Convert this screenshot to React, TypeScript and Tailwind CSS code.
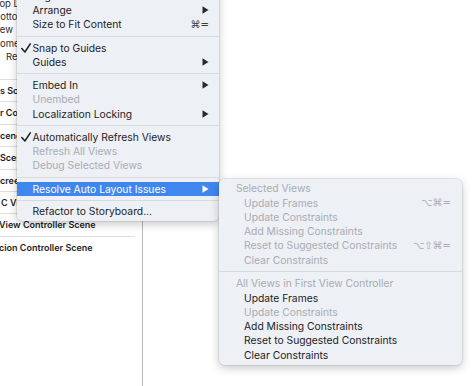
import React from "react";

type ItemProps = {
  label: string;
  disabled?: boolean;
  check?: boolean;
  arrow?: boolean;
  shortcut?: string;
  highlighted?: boolean;
  lead: string;
  pr: string;
};

const Check = () => (
  <svg width="10" height="10" viewBox="0 0 10 10" className="block">
    <path d="M0.8 5.6 L3.9 9 L9.3 0.8" fill="none" stroke="#1e1e1e" strokeWidth="1.5" strokeLinecap="round" strokeLinejoin="round" />
  </svg>
);

const Arrow = ({ white }: { white?: boolean }) => (
  <svg width="7" height="8" viewBox="0 0 7 8" className="block shrink-0">
    <path d="M0.5 0.3 L6.5 4 L0.5 7.7 Z" fill={white ? "#ffffff" : "#2a2a2a"} />
  </svg>
);

function Item({ label, disabled, check, arrow, shortcut, highlighted, lead, pr }: ItemProps) {
  const color = highlighted ? "text-white bg-[#3f87ef]" : disabled ? "text-[#a9acb2]" : "text-[#1d1d1f]";
  return (
    <div className={`h-[14.25px] flex items-center ${pr} ${color}`}>
      <div className={`${lead} shrink-0 flex items-center pl-[4px]`}>{check && <Check />}</div>
      <span className="flex-1 whitespace-nowrap leading-none">{label}</span>
      {arrow && <Arrow white={highlighted} />}
      {shortcut && (
        <span className={`font-['DejaVu_Sans',sans-serif] text-[10px] leading-none whitespace-nowrap ${disabled ? "text-[#a9acb2]" : "text-[#3a3a3a]"}`}>
          {shortcut}
        </span>
      )}
    </div>
  );
}

const Sep = ({ h = "h-[9px]" }: { h?: string }) => (
  <div className={`${h} flex items-center`}>
    <div className="h-px w-full bg-[#d7d9de]" />
  </div>
);

export default function App() {
  const ml = "w-[15.5px]";
  const mr = "pr-[10px]";
  const sl = "w-[25px]";
  const sh = "w-[17px]";
  const sr = "pr-[11px]";
  const menuBox =
    "absolute bg-[#edf0f5] shadow-[0_0_0_0.5px_rgba(0,0,0,0.14),0_3px_10px_rgba(0,0,0,0.22)] text-[10.3px]";
  return (
    <div className="relative w-[474px] h-[386px] bg-white overflow-hidden flex font-[Inter,sans-serif]">
      {/* left outline column */}
      <div className="w-[143px] h-full border-r border-[#b9b9b9] overflow-hidden text-[9px]">
        <div className="mt-[-3px] h-[82px] text-[#2c2c2c] text-[9.5px]">
          <div className="h-[13.4px] flex items-center whitespace-nowrap ml-[-6px]">Top Layout Guide</div>
          <div className="h-[13.4px] flex items-center whitespace-nowrap ml-[-6px]">Bottom Layout Guide</div>
          <div className="h-[13.4px] flex items-center whitespace-nowrap ml-[-9px]">View</div>
          <div className="h-[13.4px] flex items-center whitespace-nowrap ml-[-7px]">Home</div>
          <div className="h-[13.4px] flex items-center whitespace-nowrap ml-[6px]">Resolve</div>
        </div>
        <div className="mr-[7px] font-semibold text-[#1e1e1e]">
          {[
            ["ml-0", "s Scene"],
            ["ml-0", "r Controller Scene"],
            ["ml-0", "cene"],
            ["ml-0", "Scene"],
            ["ml-0", "creen"],
            ["ml-[1px]", "C View Controller"],
            ["ml-[-1px]", "View Controller Scene"],
            ["ml-[-1px]", "cion Controller Scene"],
          ].map(([m, t], i) => (
            <div key={i} className="h-[22.4px] flex items-center border-t border-[#dedede] whitespace-nowrap">
              <span className={m}>{t}</span>
            </div>
          ))}
        </div>
      </div>
      <div className="flex-1 h-full bg-white" />

      {/* main context menu */}
      <div className={`${menuBox} left-[17px] top-[-11px] w-[202px] rounded-b-[5px] pb-[3px]`}>
        <Item label="Align" arrow lead={ml} pr={mr} />
        <Item label="Arrange" arrow lead={ml} pr={mr} />
        <Item label="Size to Fit Content" shortcut="⌘=" lead={ml} pr={mr} />
        <Sep />
        <Item label="Snap to Guides" check lead={ml} pr={mr} />
        <Item label="Guides" arrow lead={ml} pr={mr} />
        <Sep />
        <Item label="Embed In" arrow lead={ml} pr={mr} />
        <Item label="Unembed" disabled lead={ml} pr={mr} />
        <Item label="Localization Locking" arrow lead={ml} pr={mr} />
        <Sep />
        <Item label="Automatically Refresh Views" check lead={ml} pr={mr} />
        <Item label="Refresh All Views" disabled lead={ml} pr={mr} />
        <Item label="Debug Selected Views" disabled lead={ml} pr={mr} />
        <Sep />
        <Item label="Resolve Auto Layout Issues" arrow highlighted lead={ml} pr={mr} />
        <Sep h="h-[8px]" />
        <Item label="Refactor to Storyboard..." lead={ml} pr={mr} />
      </div>

      {/* submenu */}
      <div className={`${menuBox} left-[219px] top-[179px] w-[243px] rounded-[5px] pt-[2.5px] pb-[3px]`}>
        <Item label="Selected Views" disabled lead={sh} pr={sr} />
        <Item label="Update Frames" disabled shortcut="⌥⌘=" lead={sl} pr={sr} />
        <Item label="Update Constraints" disabled lead={sl} pr={sr} />
        <Item label="Add Missing Constraints" disabled lead={sl} pr={sr} />
        <Item label="Reset to Suggested Constraints" disabled shortcut="⌥⇧⌘=" lead={sl} pr={sr} />
        <Item label="Clear Constraints" disabled lead={sl} pr={sr} />
        <Sep h="h-[9.5px]" />
        <Item label="All Views in First View Controller" disabled lead={sh} pr={sr} />
        <Item label="Update Frames" lead={sl} pr={sr} />
        <Item label="Update Constraints" disabled lead={sl} pr={sr} />
        <Item label="Add Missing Constraints" lead={sl} pr={sr} />
        <Item label="Reset to Suggested Constraints" lead={sl} pr={sr} />
        <Item label="Clear Constraints" lead={sl} pr={sr} />
      </div>
    </div>
  );
}
